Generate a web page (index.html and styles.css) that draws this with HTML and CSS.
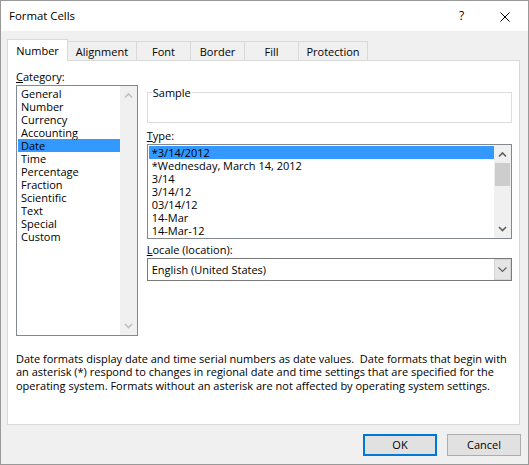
FILE: index.html
```html
<!DOCTYPE html>
<html>
<head>
<meta charset="utf-8">
<link rel="stylesheet" href="styles.css">
</head>
<body>
<div class="dialog">
  <div class="titlebar">
    <span class="title">Format Cells</span>
    <span class="help">?</span>
    <span class="close"><svg width="10" height="10" viewBox="0 0 10 10"><path d="M0.5 0.5 L9.5 9.5 M9.5 0.5 L0.5 9.5" stroke="#000" stroke-width="1" fill="none"/></svg></span>
  </div>
  <div class="tabs">
    <div class="tab active w-number">Number</div>
    <div class="tab w-alignment">Alignment</div>
    <div class="tab w-small">Font</div>
    <div class="tab w-small">Border</div>
    <div class="tab w-small">Fill</div>
    <div class="tab w-protection">Protection</div>
  </div>
  <div class="panel">
    <div class="cols">
      <div class="left">
        <div class="label"><u>C</u>ategory:</div>
        <div class="listbox cat">
          <ul class="items">
            <li>General</li>
            <li>Number</li>
            <li>Currency</li>
            <li>Accounting</li>
            <li class="sel focus">Date</li>
            <li>Time</li>
            <li>Percentage</li>
            <li>Fraction</li>
            <li>Scientific</li>
            <li>Text</li>
            <li>Special</li>
            <li>Custom</li>
          </ul>
          <div class="vscroll disabled">
            <span class="arrow up"><svg width="17" height="17" viewBox="0 0 17 17"><polyline points="5,11.5 8.5,8 12,11.5" fill="none" stroke-width="1.6"/></svg></span>
            <span class="track"></span>
            <span class="arrow down"><svg width="17" height="17" viewBox="0 0 17 17"><polyline points="5,6 8.5,9.5 12,6" fill="none" stroke-width="1.6"/></svg></span>
          </div>
        </div>
      </div>
      <div class="right">
        <fieldset class="sample"><legend>Sample</legend></fieldset>
        <div class="label type-label"><u>T</u>ype:</div>
        <div class="listbox typelist">
          <ul class="items">
            <li class="sel">*3/14/2012</li>
            <li>*Wednesday, March 14, 2012</li>
            <li>3/14</li>
            <li>3/14/12</li>
            <li>03/14/12</li>
            <li>14-Mar</li>
            <li>14-Mar-12</li>
          </ul>
          <div class="vscroll">
            <span class="arrow up"><svg width="17" height="17" viewBox="0 0 17 17"><polyline points="5,11.5 8.5,8 12,11.5" fill="none" stroke-width="1.6"/></svg></span>
            <span class="track"><span class="thumb"></span></span>
            <span class="arrow down"><svg width="17" height="17" viewBox="0 0 17 17"><polyline points="5,6 8.5,9.5 12,6" fill="none" stroke-width="1.6"/></svg></span>
          </div>
        </div>
        <div class="label locale-label"><u>L</u>ocale (location):</div>
        <div class="combo">
          <span class="combo-text">English (United States)</span>
          <span class="drop"><svg width="17" height="21" viewBox="0 0 17 21"><polyline points="4.5,8.5 8.5,12.5 12.5,8.5" fill="none" stroke="#606060" stroke-width="1.2"/></svg></span>
        </div>
      </div>
    </div>
    <p class="desc">Date formats display date and time serial numbers as date values.&nbsp; Date formats that begin with<br>an asterisk (*) respond to changes in regional date and time settings that are specified for the<br>operating system. Formats without an asterisk are not affected by operating system settings.</p>
  </div>
  <div class="buttons">
    <button class="btn ok">OK</button>
    <button class="btn">Cancel</button>
  </div>
</div>
</body>
</html>
```
FILE: styles.css
```css
* { box-sizing: border-box; }
html, body { margin: 0; padding: 0; background: #f0f0f0; }
body {
  font-family: "Open Sans", "Noto Sans", sans-serif;
  font-size: 11px;
  color: #000;
}
.dialog {
  width: 529px;
  height: 465px;
  border: 1px solid #999;
  background: #f0f0f0;
  display: flex;
  flex-direction: column;
}
.titlebar {
  height: 30px;
  background: #fff;
  display: flex;
  align-items: center;
  line-height: 30px;
  font-size: 11.4px;
}
.title { flex: 1; padding-left: 8px; }
.help { width: 46px; text-align: center; padding-left: 5px; font-size: 12px; }
.close { width: 46px; display: flex; justify-content: center; align-items: center; height: 30px; }
.close svg { display: block; margin-top: 1px; }

.tabs {
  margin-top: 8px;
  padding-left: 6px;
  height: 21px;
  display: flex;
  align-items: flex-end;
  position: relative;
  z-index: 1;
}
.tab {
  height: 19px;
  border: 1px solid #d9d9d9;
  border-bottom: none;
  background: #f0f0f0;
  margin-left: -1px;
  text-align: center;
  line-height: 19px;
}
.tab:first-child { margin-left: 0; }
.tab.active {
  height: 22px;
  margin-bottom: -1px;
  background: #fff;
  line-height: 21px;
}
.w-number { width: 61px; }
.w-alignment { width: 70px; }
.w-small { width: 55px; }
.w-protection { width: 70px; }

.panel {
  margin: 0 8px 0 6px;
  height: 365px;
  border: 1px solid #d9d9d9;
  background: #fff;
  padding: 8px 7px 0 8px;
}
.cols {
  display: flex;
  gap: 9px;
}
.left { width: 122px; }
.right { width: 366px; }
.label { height: 15px; line-height: 15px; }
.listbox {
  border: 1px solid #828790;
  background: #fff;
  display: flex;
  margin-top: 1px;
}
.listbox.cat { height: 251px; }
.listbox.typelist { height: 95px; }
.items {
  list-style: none;
  margin: 0;
  padding: 1px 0 0 1px;
  flex: 1;
}
.items li {
  height: 13px;
  line-height: 13px;
  padding-left: 3px;
  white-space: nowrap;
}
.items li.sel { background: #3399ff; }
.items li.focus { outline: 1px dotted #c07a36; outline-offset: -1px; }
.vscroll {
  width: 17px;
  background: #f0f0f0;
  display: flex;
  flex-direction: column;
}
.vscroll .arrow { height: 17px; display: block; }
.vscroll .arrow svg { display: block; stroke: #606060; }
.vscroll.disabled .arrow svg { stroke: #c0c0c0; }
.vscroll .track { flex: 1; display: block; padding: 1px 1px 0 1px; }
.thumb { display: block; height: 23px; background: #cdcdcd; }

.sample {
  margin: 16px 0 0 0;
  padding: 0 4px;
  height: 38px;
  border: 1px solid #dcdcdc;
  min-width: 0;
}
.sample legend {
  padding: 0 1px;
  line-height: 15px;
  height: 15px;
}
.type-label { margin-top: 5px; }
.locale-label { margin-top: 3px; }
.combo {
  margin-top: 1px;
  height: 23px;
  border: 1px solid #7a7a7a;
  display: flex;
  align-items: stretch;
}
.combo-text { flex: 1; padding-left: 4px; line-height: 21px; }
.drop {
  width: 17px;
  background: #e5e5e5;
  box-shadow: inset 0 0 0 1px #d4d4d4;
}
.drop svg { display: block; }

.desc {
  margin: 16px 0 0 0;
  line-height: 13.3px;
  white-space: nowrap;
}

.buttons {
  margin-top: 9px;
  padding-right: 7px;
  display: flex;
  justify-content: flex-end;
  gap: 10px;
}
.btn {
  width: 74px;
  height: 22px;
  border: 1px solid #adadad;
  background: #e1e1e1;
  font: inherit;
  color: #000;
  padding: 0;
  line-height: 18px;
}
.btn.ok { border: 2px solid #0078d7; }
```
